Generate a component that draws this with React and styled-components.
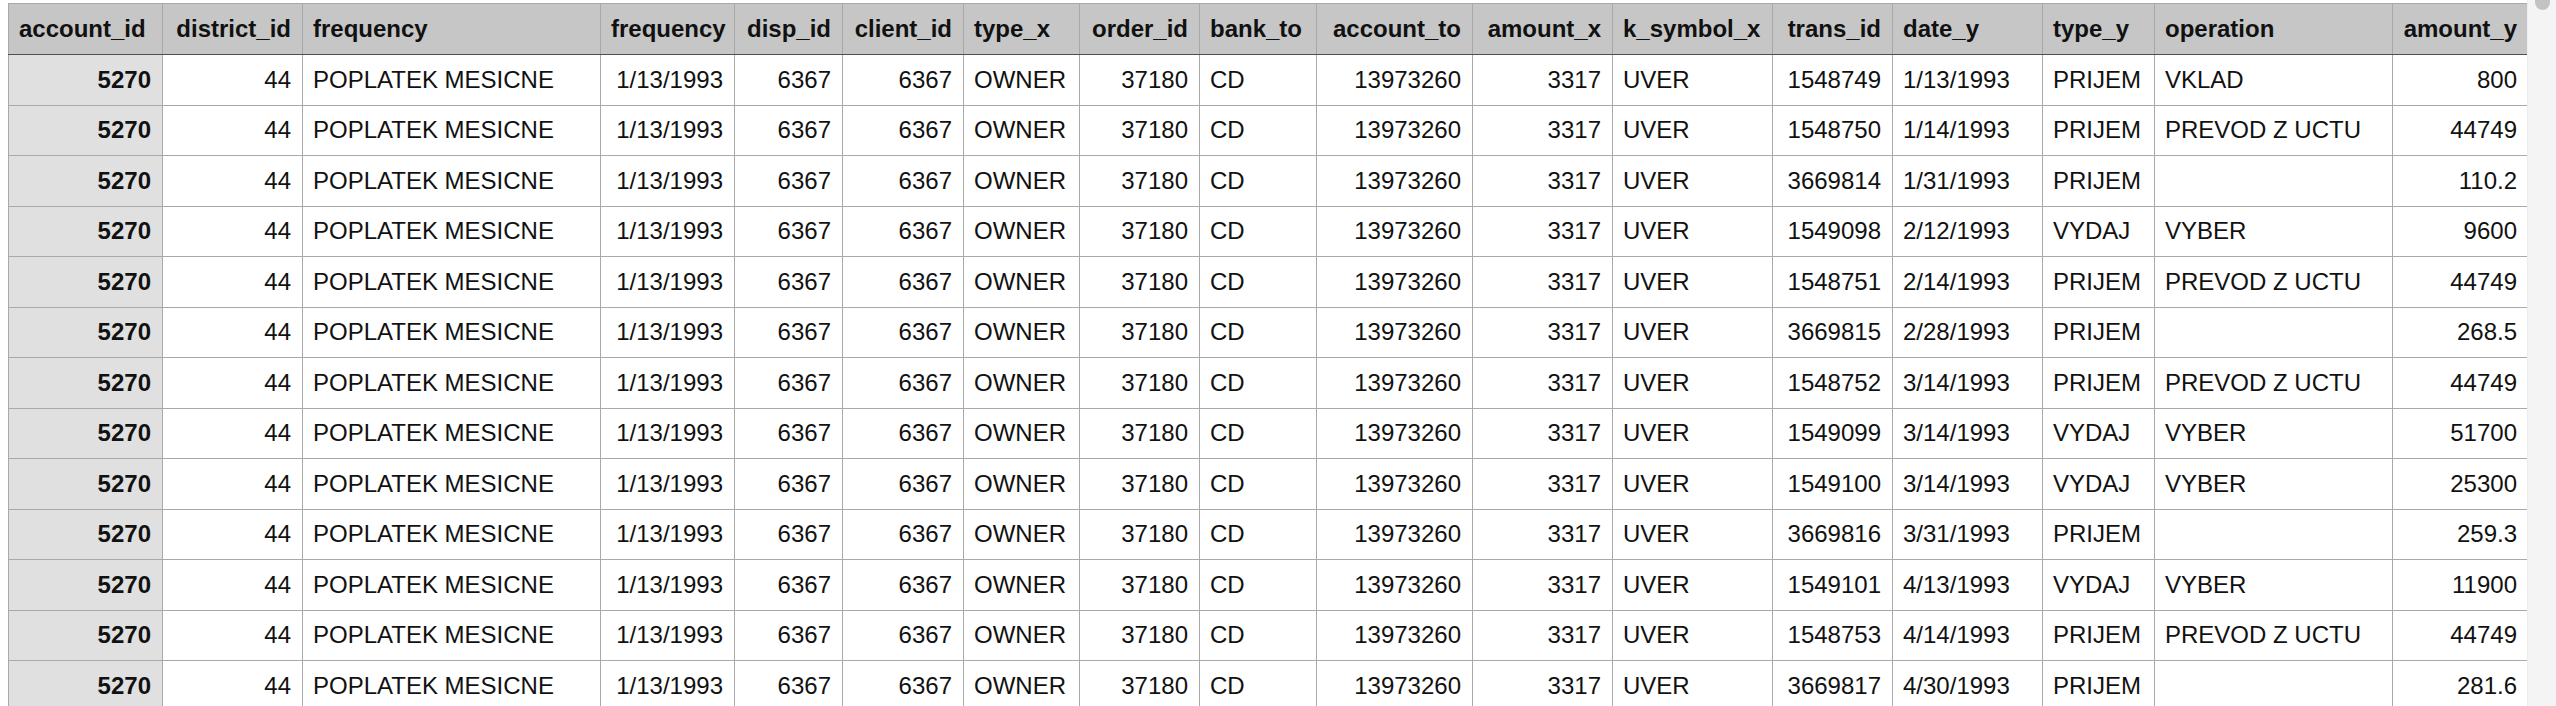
import React from "react"
import styled, { createGlobalStyle } from "styled-components"

const GlobalStyle = createGlobalStyle`
  html, body {
    margin: 0;
    padding: 0;
    background: #ffffff;
  }
  body {
    font-family: "Liberation Sans", Arial, sans-serif;
    color: #111111;
  }
`

const Page = styled.div`
  display: flex;
  flex-direction: row;
  width: 2556px;
  height: 706px;
  overflow: hidden;
`

const TableWrap = styled.div`
  flex: 1;
  padding: 3px 0 0 8px;
  overflow: hidden;
`

const Sheet = styled.table`
  width: 2520px;
  table-layout: fixed;
  border-collapse: collapse;
  font-size: 24px;
  line-height: 1;
  th, td {
    border: 1px solid #a9a9a9;
    padding: 0 11px 0 10px;
    white-space: nowrap;
    overflow: hidden;
  }
`

const HeadRow = styled.tr`
  height: 51px;
  background: #c5c6c5;
  th {
    font-weight: 700;
    border-bottom: 1px solid #4f4f4f;
  }
`

const HeadCell = styled.th`
  text-align: ${(p) => (p.$num ? "right" : "left")};
`

const Row = styled.tr`
  height: 50.5px;
`

const Cell = styled.td`
  text-align: ${(p) => (p.$num ? "right" : "left")};
  background: #ffffff;
`

const IndexCell = styled.td`
  text-align: right;
  font-weight: 700;
  background: #e0e0e0;
`

const Scrollbar = styled.div`
  width: 28px;
  flex: none;
  background: #f4f4f4;
  border-left: 1px solid #ececec;
  display: flex;
  justify-content: center;
  overflow: hidden;
`

const Thumb = styled.div`
  width: 15px;
  height: 40px;
  margin-top: -30px;
  border-radius: 8px;
  background: #c3c3c3;
`

const columns = [
  { key: "account_id", width: 154, num: true },
  { key: "district_id", width: 140, num: true },
  { key: "frequency", width: 298 },
  { key: "frequency", width: 134, num: true, label: "frequency" },
  { key: "disp_id", width: 108, num: true },
  { key: "client_id", width: 121, num: true },
  { key: "type_x", width: 116 },
  { key: "order_id", width: 120, num: true },
  { key: "bank_to", width: 117 },
  { key: "account_to", width: 156, num: true },
  { key: "amount_x", width: 140, num: true },
  { key: "k_symbol_x", width: 160 },
  { key: "trans_id", width: 120, num: true },
  { key: "date_y", width: 150 },
  { key: "type_y", width: 112 },
  { key: "operation", width: 238 },
  { key: "amount_y", width: 136, num: true },
]

const trans = [
  ["1548749", "1/13/1993", "PRIJEM", "VKLAD", "800"],
  ["1548750", "1/14/1993", "PRIJEM", "PREVOD Z UCTU", "44749"],
  ["3669814", "1/31/1993", "PRIJEM", "", "110.2"],
  ["1549098", "2/12/1993", "VYDAJ", "VYBER", "9600"],
  ["1548751", "2/14/1993", "PRIJEM", "PREVOD Z UCTU", "44749"],
  ["3669815", "2/28/1993", "PRIJEM", "", "268.5"],
  ["1548752", "3/14/1993", "PRIJEM", "PREVOD Z UCTU", "44749"],
  ["1549099", "3/14/1993", "VYDAJ", "VYBER", "51700"],
  ["1549100", "3/14/1993", "VYDAJ", "VYBER", "25300"],
  ["3669816", "3/31/1993", "PRIJEM", "", "259.3"],
  ["1549101", "4/13/1993", "VYDAJ", "VYBER", "11900"],
  ["1548753", "4/14/1993", "PRIJEM", "PREVOD Z UCTU", "44749"],
  ["3669817", "4/30/1993", "PRIJEM", "", "281.6"],
]

// every row shares the account/order part, only the transaction differs
const base = [
  "44",
  "POPLATEK MESICNE",
  "1/13/1993",
  "6367",
  "6367",
  "OWNER",
  "37180",
  "CD",
  "13973260",
  "3317",
  "UVER",
]

const rows = trans.map((t) => ["5270", ...base, ...t])

const App = () => (
  <>
    <GlobalStyle />
    <Page>
      <TableWrap>
        <Sheet>
          <colgroup>
            {columns.map((c, i) => (
              <col key={i} style={{ width: c.width }} />
            ))}
          </colgroup>
          <thead>
            <HeadRow>
              {columns.map((c, i) => (
                <HeadCell key={i} $num={i === 0 ? false : c.num}>
                  {c.label || c.key}
                </HeadCell>
              ))}
            </HeadRow>
          </thead>
          <tbody>
            {rows.map((r, ri) => (
              <Row key={ri}>
                {r.map((v, ci) =>
                  ci === 0 ? (
                    <IndexCell key={ci}>{v}</IndexCell>
                  ) : (
                    <Cell key={ci} $num={columns[ci].num}>
                      {v}
                    </Cell>
                  )
                )}
              </Row>
            ))}
          </tbody>
        </Sheet>
      </TableWrap>
      <Scrollbar>
        <Thumb />
      </Scrollbar>
    </Page>
  </>
)

export default App
